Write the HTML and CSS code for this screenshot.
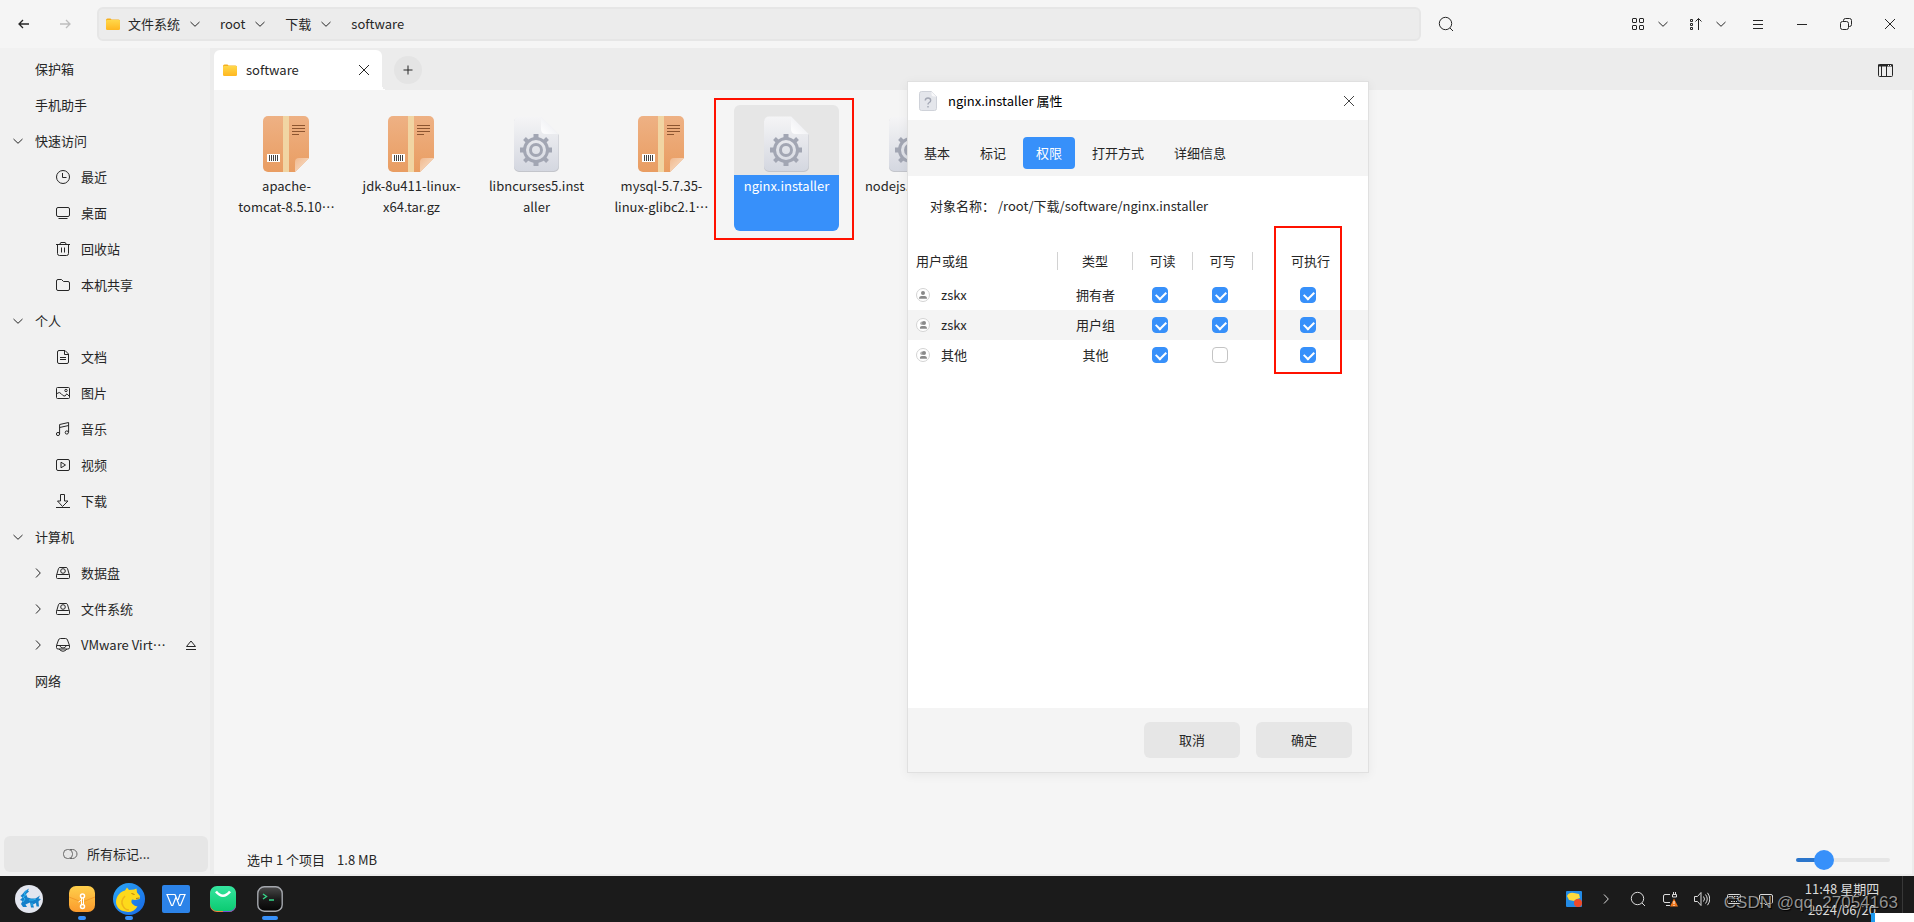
FILE: index.html
```
<!DOCTYPE html>
<html lang="zh-CN">
<head>
    <meta charset="UTF-8" />
    <meta name="viewport" content="width=device-width, initial-scale=1.0" />
    <title>software</title>
    <link rel="stylesheet" href="styles.css">
</head>
<body>
    <svg class="defs" aria-hidden="true">
        <defs>
            <linearGradient id="g-folder" x1="0" y1="0" x2="0" y2="1"><stop offset="0" stop-color="#ffd84a"/><stop offset="1" stop-color="#ffb720"/></linearGradient>
            <linearGradient id="g-box" x1="0" y1="0" x2="0" y2="1"><stop offset="0" stop-color="#eeb184"/><stop offset="1" stop-color="#e99d62"/></linearGradient>
            <linearGradient id="g-fold" x1="0" y1="0" x2="1" y2="1"><stop offset="0" stop-color="#f0b98f"/><stop offset=".6" stop-color="#f6d3b6"/></linearGradient>
            <linearGradient id="g-paper" x1="0" y1="0" x2="0" y2="1"><stop offset="0" stop-color="#f5f5f6"/><stop offset="1" stop-color="#d4d7e0"/></linearGradient>
            <linearGradient id="g-corner" x1="0" y1="1" x2="1" y2="0"><stop offset="0" stop-color="#fff"/><stop offset="1" stop-color="#e6e7ec"/></linearGradient>
            <linearGradient id="g-orange" x1="0" y1="0" x2="0" y2="1"><stop offset="0" stop-color="#ffd04c"/><stop offset="1" stop-color="#fb9a2c"/></linearGradient>
            <linearGradient id="g-blue" x1="0" y1="0" x2="1" y2="1"><stop offset="0" stop-color="#2ba7f5"/><stop offset="1" stop-color="#1767e6"/></linearGradient>
            <linearGradient id="g-green" x1="0" y1="0" x2="0" y2="1"><stop offset="0" stop-color="#35e59f"/><stop offset="1" stop-color="#0ccb72"/></linearGradient>
            <linearGradient id="g-term" x1="0" y1="0" x2="0" y2="1"><stop offset="0" stop-color="#4a4a4a"/><stop offset=".5" stop-color="#1c1c1c"/><stop offset="1" stop-color="#050505"/></linearGradient>
        </defs>
        <symbol id="down" viewBox="0 0 10 10"><path d="M.5 3 5 7.3 9.5 3"/></symbol>
        <symbol id="right" viewBox="0 0 10 10"><path d="M3 .5 7.3 5 3 9.5"/></symbol>
        <symbol id="close" viewBox="0 0 12 12"><path d="m1 1 10 10M11 1 1 11"/></symbol>
        <symbol id="search" viewBox="0 0 16 16"><circle cx="7.5" cy="7.5" r="6.2"/><path d="m12 12 3 3"/></symbol>
        <symbol id="folder" viewBox="0 0 16 16"><path d="M1 4a1.5 1.5 0 0 1 1.500-1.500h3l1 1H13.500A1.500 1.500 0 0 1 15 5v3H1z" fill="#f5b01e"/><rect x="1" y="4" width="14" height="10" rx="1.300" fill="url(#g-folder)"/></symbol>
        <symbol id="archive" viewBox="0 0 46 56">
            <path d="M5 0h36a5 5 0 0 1 5 5v37L32 56H5a5 5 0 0 1-5-5V5a5 5 0 0 1 5-5z" fill="url(#g-box)"/>
            <path d="M20 0h6v56h-6z" fill="#f1d5a3"/>
            <path d="M46 42 32 56V46q0-4 4-4z" fill="url(#g-fold)"/>
            <path d="M29 9.500h13M29 12.500h13M29 15.500h13M29 18.500h7" stroke="#8d5530"/>
            <path d="M4 38h13v8H4z" fill="#fff"/>
            <path d="M6.500 39v6M8.500 39v6M10.500 39v6M12.500 39v6M14.500 39v6" stroke="#444"/>
        </symbol>
        <symbol id="package" viewBox="0 0 46 56">
            <path d="M6 1.500h22L46 19v32a5 5 0 0 1-5 5H6a5 5 0 0 1-5-5V6a5 5 0 0 1 5-4.500z" fill="#c3c5cb"/>
            <path d="M6 .5h22L45.500 18v32a5 5 0 0 1-5 5H6a5 5 0 0 1-5-5V5.500a5 5 0 0 1 5-5z" fill="url(#g-paper)"/>
            <path d="M28 .5 45.500 18H33q-5 0-5-5z" fill="url(#g-corner)"/>
            <g fill="none" stroke="#a2a6b3">
                <circle cx="23" cy="34" r="11.500" stroke-width="3"/>
                <circle cx="23" cy="34" r="5.500" stroke-width="3"/>
                <path stroke-width="5" d="M23 22v-4M23 50v-4M35 34h4M7 34h4"/>
                <path stroke-width="4" d="m31.500 25.500 3-3M31.500 42.500l3 3M14.500 25.500l-3-3M14.500 42.500l-3 3"/>
            </g>
        </symbol>
        <symbol id="disk" viewBox="0 0 16 16"><path d="m1.500 10.500 2-7Q3.900 2.500 5 2.500h6q1.100 0 1.500 1l2 7M2.500 9.500h11q1 0 1 1v2q0 1-1 1h-11q-1 0-1-1v-2q0-1 1-1z"/><circle cx="8" cy="6" r="2.300"/></symbol>
        <symbol id="people" viewBox="0 0 14 14"><circle cx="7" cy="7" r="6.500" fill="#fff" stroke="#d3d3d3"/><circle cx="6" cy="5.200" r="1.800" fill="#b0b0b0"/><circle cx="8" cy="5" r="2" fill="#8a8a8a"/><path d="M4 10.800q-.5-2.800 2-2.800h2.500q2.500 0 2.500 2.800z" fill="#8a8a8a"/></symbol>
    </svg>

    <div class="window">
        <header class="toolbar">
            <div class="history">
                <button class="icon-btn" aria-label="后退"><svg class="icon" viewBox="0 0 16 16"><path d="M13 8H3.200M7 4 3 8l4 4" stroke-width="1.300"/></svg></button>
                <button class="icon-btn" aria-label="前进" disabled><svg class="icon" viewBox="0 0 16 16"><path d="M3 8h9.800M9 4l4 4-4 4" stroke-width="1.300"/></svg></button>
            </div>
            <nav class="address" aria-label="路径">
                <svg class="icon plain"><use href="#folder"/></svg>
                <a class="crumb" href="#">文件系统<svg class="chev"><use href="#down"/></svg></a>
                <a class="crumb" href="#">root<svg class="chev"><use href="#down"/></svg></a>
                <a class="crumb" href="#">下载<svg class="chev"><use href="#down"/></svg></a>
                <a class="crumb" href="#">software</a>
            </nav>
            <button class="icon-btn search-btn" aria-label="搜索"><svg class="icon"><use href="#search"/></svg></button>
            <div class="view-tools">
                <button class="split-btn" aria-label="视图"><svg class="icon-s" viewBox="0 0 14 14"><rect x="1.500" y="1.500" width="4" height="4" rx=".5"/><rect x="8.500" y="1.500" width="4" height="4" rx=".5"/><rect x="1.500" y="8.500" width="4" height="4" rx=".5"/><rect x="8.500" y="8.500" width="4" height="4" rx=".5"/></svg><svg class="chev"><use href="#down"/></svg></button>
                <button class="split-btn" aria-label="排序"><svg class="icon-s" viewBox="0 0 14 14"><path d="M1.500 2.500h2v2h-2zM1.500 6.500h2v2h-2zM1.500 10.500h2v2h-2zM9.500 13V1.500M6.500 4.500l3-3 3 3"/></svg><svg class="chev"><use href="#down"/></svg></button>
            </div>
            <button class="icon-btn" aria-label="菜单"><svg class="icon-s" viewBox="0 0 14 14"><path d="M2 3.500h10M2 7.500h10M2 11.500h10"/></svg></button>
            <button class="icon-btn" aria-label="最小化"><svg class="icon-s" viewBox="0 0 14 14"><path d="M2 7.500h10"/></svg></button>
            <button class="icon-btn" aria-label="还原"><svg class="icon-s" viewBox="0 0 14 14"><rect x="1.500" y="4.500" width="8" height="8" rx="2"/><path d="M4.500 4.500v-1q0-2 2-2h4q2 0 2 2v4q0 2-2 2h-1"/></svg></button>
            <button class="icon-btn" aria-label="关闭"><svg class="icon-x"><use href="#close"/></svg></button>
        </header>

        <div class="main">
            <aside class="sidebar">
                <nav class="places">
                    <a class="group" href="#"><span class="chev"></span>保护箱</a>
                    <a class="group" href="#"><span class="chev"></span>手机助手</a>
                    <a class="group" href="#"><svg class="chev"><use href="#down"/></svg>快速访问</a>
                    <a class="place" href="#"><span class="chev"></span><svg class="icon" viewBox="0 0 16 16"><circle cx="8" cy="8" r="6.500"/><path d="M7.500 4v4.500h4"/></svg>最近</a>
                    <a class="place" href="#"><span class="chev"></span><svg class="icon" viewBox="0 0 16 16"><rect x="1.500" y="2.500" width="13" height="9" rx="1.500"/><path d="M3.500 13.500h9"/></svg>桌面</a>
                    <a class="place" href="#"><span class="chev"></span><svg class="icon" viewBox="0 0 16 16"><path d="M1 3.500h14M2.500 3.500v9q0 2 2 2h7q2 0 2-2v-9M5 3.500q0-2 1-2h4q1 0 1 2M6.500 6.500v5M9.500 6.500v5"/></svg>回收站</a>
                    <a class="place" href="#"><span class="chev"></span><svg class="icon" viewBox="0 0 16 16"><path d="M1.500 4q0-1.500 1.500-1.500h3.500l2 2H13q1.500 0 1.500 1.500v6q0 1.500-1.500 1.500H3q-1.500 0-1.500-1.500z"/></svg>本机共享</a>
                    <a class="group" href="#"><svg class="chev"><use href="#down"/></svg>个人</a>
                    <a class="place" href="#"><span class="chev"></span><svg class="icon" viewBox="0 0 16 16"><path d="M4 1.500h6L13.500 5v8q0 1.500-1.500 1.500H4q-1.500 0-1.500-1.500V3q0-1.500 1.500-1.500zM9.500 2v3.500h4M5 8.500h6M5 10.500h6"/></svg>文档</a>
                    <a class="place" href="#"><span class="chev"></span><svg class="icon" viewBox="0 0 16 16"><rect x="1.500" y="2.500" width="13" height="11" rx="1"/><circle cx="11" cy="5.500" r="1.200"/><path d="M2 8.500q2.500-2 4 0t3 2.500 2-1.500 3 1.500"/></svg>图片</a>
                    <a class="place" href="#"><span class="chev"></span><svg class="icon" viewBox="0 0 16 16"><circle cx="3" cy="13" r="1.600"/><circle cx="11.800" cy="11.500" r="1.600"/><path d="M4.600 13V3.500l9-2v10M4.600 6.500l9-2"/></svg>音乐</a>
                    <a class="place" href="#"><span class="chev"></span><svg class="icon" viewBox="0 0 16 16"><rect x="1.500" y="2.500" width="13" height="11" rx="1.500"/><path d="M6 5.200v5.600L10.500 8z"/></svg>视频</a>
                    <a class="place" href="#"><span class="chev"></span><svg class="icon" viewBox="0 0 16 16"><path d="M1 14.500h14M5.500 1.500h4v6.500H13L7.500 13.500 2.500 8h3z"/></svg>下载</a>
                    <a class="group" href="#"><svg class="chev"><use href="#down"/></svg>计算机</a>
                    <a class="place" href="#"><svg class="chev"><use href="#right"/></svg><svg class="icon"><use href="#disk"/></svg>数据盘</a>
                    <a class="place" href="#"><svg class="chev"><use href="#right"/></svg><svg class="icon"><use href="#disk"/></svg>文件系统</a>
                    <a class="place" href="#"><svg class="chev"><use href="#right"/></svg><svg class="icon" viewBox="0 0 16 16"><path d="m1.500 8.500 2-5.500Q4 1.500 5.500 1.500h5q1.500 0 2 1.500l2 5.500v2q0 1.500-1.500 1.500H3q-1.500 0-1.500-1.500zM1.500 8.500h13M5 9q.5 2 3 2t3-2M4 12q4 4.500 8 0"/></svg>VMware Virt…<svg class="eject" viewBox="0 0 12 12"><path d="M1.500 7.500h9L6 2zM1 10.500h10"/></svg></a>
                    <a class="group" href="#"><span class="chev"></span>网络</a>
                </nav>
                <button class="tags-btn"><svg class="icon" viewBox="0 0 16 16"><rect x="1.500" y="3.500" width="9" height="9" rx="4"/><path d="M8 3.500h2.500a4.500 4.500 0 0 1 0 9H8"/></svg>所有标记...</button>
            </aside>

            <section class="content">
                <div class="tabbar">
                    <div class="tab">
                        <svg class="icon plain"><use href="#folder"/></svg>
                        <span class="tab-title">software</span>
                        <button class="tab-close" aria-label="关闭标签页"><svg class="icon-x"><use href="#close"/></svg></button>
                    </div>
                    <button class="tab-new" aria-label="新建标签页"><svg class="icon-s" viewBox="0 0 14 14"><path d="M2.500 7h9M7 2.500v9"/></svg></button>
                    <button class="panel-btn" aria-label="预览"><svg class="icon" viewBox="0 0 16 16"><rect x="1.500" y="2.500" width="14" height="12" rx="1"/><path d="M4.500 4v10.500M9.500 4v10.500"/><path d="M1 3.500h15" stroke-width="2"/><path d="M11 3.500h1M13 3.500h1" stroke="#ececec"/></svg></button>
                </div>

                <div class="files">
                    <div class="file"><div class="thumb"><svg><use href="#archive"/></svg></div><div class="name">apache-<br>tomcat-8.5.10…</div></div>
                    <div class="file"><div class="thumb"><svg><use href="#archive"/></svg></div><div class="name">jdk-8u411-linux-<br>x64.tar.gz</div></div>
                    <div class="file"><div class="thumb"><svg><use href="#package"/></svg></div><div class="name">libncurses5.inst<br>aller</div></div>
                    <div class="file"><div class="thumb"><svg><use href="#archive"/></svg></div><div class="name">mysql-5.7.35-<br>linux-glibc2.1…</div></div>
                    <div class="file selected"><div class="thumb"><svg><use href="#package"/></svg></div><div class="name">nginx.installer</div><div class="mark mark-file"></div></div>
                    <div class="file"><div class="thumb"><svg><use href="#package"/></svg></div><div class="name">nodejs.installer</div></div>
                </div>

                <footer class="statusbar">
                    <span>选中 1 个项目</span>
                    <span>1.8 MB</span>
                    <input class="zoom" type="range" min="0" max="100" value="24" aria-label="缩放">
                </footer>
            </section>
        </div>

        <div class="dialog" role="dialog" aria-labelledby="dialog-title">
            <div class="dialog-head">
                <svg class="doc" viewBox="0 0 18 20"><path d="M2.500.5h10l5 5v12q0 2-2 2h-13q-2 0-2-2v-15q0-2 2-2z" fill="#e4e6eb" stroke="#cfd2d9"/><path d="M12.500.5v3q0 2 2 2h3z" fill="#f8f8fa"/><path d="M6.200 9.500q.3-2.500 2.800-2.500t2.700 2.200q0 1.500-1.400 2.300T9 13.500M9 15v1.500" fill="none" stroke="#a2a6b3" stroke-width="1.400"/></svg>
                <span id="dialog-title">nginx.installer 属性</span>
                <button class="dialog-close" aria-label="关闭"><svg class="icon-x"><use href="#close"/></svg></button>
            </div>
            <div class="dialog-tabs" role="tablist">
                <button role="tab">基本</button>
                <button role="tab">标记</button>
                <button role="tab" class="active" aria-selected="true">权限</button>
                <button role="tab">打开方式</button>
                <button role="tab">详细信息</button>
            </div>
            <div class="dialog-body">
                <p class="target">对象名称： /root/下载/software/nginx.installer</p>
                <table class="perms">
                    <thead>
                        <tr><th class="col-user">用户或组</th><th class="col-type">类型</th><th class="col-flag">可读</th><th class="col-flag">可写</th><th>可执行</th></tr>
                    </thead>
                    <tbody>
                        <tr>
                            <td><div class="user"><svg viewBox="0 0 14 14"><circle cx="7" cy="7" r="6.500" fill="#fff" stroke="#d3d3d3"/><circle cx="7" cy="5" r="2" fill="#8a8a8a"/><path d="M3 10.800q0-2.800 2.500-2.800h3q2.500 0 2.500 2.800z" fill="#8a8a8a"/></svg>zskx</div></td>
                            <td>拥有者</td>
                            <td class="flag"><input type="checkbox" aria-label="拥有者可读" checked></td>
                            <td class="flag"><input type="checkbox" aria-label="拥有者可写" checked></td>
                            <td class="flag"><input type="checkbox" aria-label="拥有者可执行" checked></td>
                        </tr>
                        <tr>
                            <td><div class="user"><svg><use href="#people"/></svg>zskx</div></td>
                            <td>用户组</td>
                            <td class="flag"><input type="checkbox" aria-label="用户组可读" checked></td>
                            <td class="flag"><input type="checkbox" aria-label="用户组可写" checked></td>
                            <td class="flag"><input type="checkbox" aria-label="用户组可执行" checked></td>
                        </tr>
                        <tr>
                            <td><div class="user"><svg><use href="#people"/></svg>其他</div></td>
                            <td>其他</td>
                            <td class="flag"><input type="checkbox" aria-label="其他可读" checked></td>
                            <td class="flag"><input type="checkbox" aria-label="其他可写"></td>
                            <td class="flag"><input type="checkbox" aria-label="其他可执行" checked></td>
                        </tr>
                    </tbody>
                </table>
            </div>
            <div class="dialog-foot">
                <button>取消</button>
                <button>确定</button>
            </div>
            <div class="mark mark-exec"></div>
        </div>
    </div>

    <div class="taskbar">
        <button class="start" aria-label="开始"><svg width="28" height="28" viewBox="0 0 28 28"><circle cx="14" cy="14" r="14" fill="#e3e6ef"/><path d="M14 3.500 10 6 7.500 9l-2 2 2 1.500L5 15l2.500 1L6 19l2 3h4l-1.500-2.500L15 17.500l1 5H19l-1-3 3-1.500.5 3.500H24l-.5-5L26 14l-2.500-.5L25 10.500l-4.500 3-4.500 0-3.500-1L11 9l3-2.500-1-1z" fill="#1580ca"/><path d="m12 5-3 4 2 1-3 2 2 2-2 3M14 15h4l3-1M17 18v3" fill="none" stroke="#2fb4ef"/></svg></button>
        <button class="app running" aria-label="文件管理器"><svg width="26" height="26" viewBox="0 0 26 26"><rect width="26" height="26" rx="7" fill="url(#g-orange)"/><path d="M0 11 10 15q3 1 6 0l10-4" fill="none" stroke="#f29a2a"/><path d="M12.500 11v9M14.500 11v9" stroke="#fff"/><circle cx="13.500" cy="10" r="2" fill="#f9a93a" stroke="#fff" stroke-width="1.500"/><circle cx="13.500" cy="20.500" r="2" fill="#f9a93a" stroke="#fff" stroke-width="1.500"/><path d="m9.500 16 3-2" stroke="#fff"/></svg></button>
        <button class="app running" aria-label="浏览器"><svg width="32" height="32" viewBox="0 0 32 32"><circle cx="16" cy="16" r="16" fill="url(#g-blue)"/><path d="M3 19C3 13 8 8 12 7.500L14 4.500l2 2.500 5-.5L23.500 5.500l.5 4L27 13l-.5 3-4.500 1-3-.5q-1.500 2.500.5 4.500t5 2.500Q21 29 15 29l-5-1C6 27 3 23 3 19z" fill="#fdd91b"/><path d="M12 13q-5 5-2 10 2 4 6 4" fill="none" stroke="#efb41a" stroke-width="1.500"/><path d="m18.500 10.500 3 1M23 15.500l3-.5" stroke="#b87a08"/></svg></button>
        <button class="app" aria-label="WPS"><svg width="28" height="28" viewBox="0 0 28 28"><rect width="28" height="28" rx="2" fill="#2c83e8"/><path d="M10.500 9.500H5l4.500 11h1.200L14 12l3.300 8.500h1.200l4.500-11h-5L16 15M5 9.500h8L14 12" fill="none" stroke="#fff" stroke-width="1.200"/></svg></button>
        <button class="app" aria-label="应用商店"><svg width="26" height="26" viewBox="0 0 26 26"><rect y="1" width="26" height="25" rx="7" fill="#f0803c"/><path d="M13 20h13v-1a7 7 0 0 1-7 7h-6z" fill="#7355d8"/><rect width="26" height="25" rx="7" fill="url(#g-green)"/><path d="M6 5.500q7 8.500 14 0" fill="none" stroke="#fff" stroke-width="2.600"/></svg></button>
        <button class="app running active" aria-label="终端"><svg width="26" height="26" viewBox="0 0 26 26"><rect x=".8" y=".8" width="24.400" height="24.400" rx="6.500" fill="url(#g-term)" stroke="#a5a8ae" stroke-width="1.400"/><path d="m6 8 3.500 2.500L6 13M12 14h5" fill="none" stroke="#35d487" stroke-width="1.400"/></svg></button>

        <div class="tray">
            <button aria-label="浏览器消息"><svg class="plain" width="16" height="16" viewBox="0 0 16 16"><rect width="16" height="16" rx="1" fill="#238be6"/><path d="M1 5q2-4 7-3l5 1 1 4-3 1-3 2-5-1z" fill="#fddb3d"/><circle cx="12" cy="12" r="4" fill="#f04a28"/></svg></button>
            <button aria-label="展开"><svg class="chev"><use href="#right"/></svg></button>
            <button aria-label="搜索"><svg class="icon"><use href="#search"/></svg></button>
            <button aria-label="网络"><svg class="icon" viewBox="0 0 16 16"><path d="M8 3.500H3q-1.500 0-1.500 1.500v5q0 1.500 1.500 1.500h5M4 14.500h4M10.500 6V3.500h4V6zM11.500 3.500V1M13.500 3.500V1"/><path d="M12 7.500 16 15.500H8z" fill="#f0761a" stroke="none"/><path d="M12 10v3M12 14v1" stroke="#fff"/></svg></button>
            <button aria-label="音量"><svg class="icon" viewBox="0 0 16 16"><path d="M.5 5.500h3l3.500-4v13l-3.500-4h-3zM9.500 5.500q2 2.500 0 5M11.500 3.500q3.500 4.500 0 9M13.500 1.800q4.500 6.200 0 12.400"/></svg></button>
            <button aria-label="输入法"><svg class="icon" viewBox="0 0 16 16"><rect x="1.500" y="3.500" width="13" height="9" rx="1"/><path d="M3 5.500h10M3 7.500h10M5 10.500h6" stroke-dasharray="1.500 1"/></svg></button>
            <button aria-label="通知"><svg class="icon" viewBox="0 0 16 16"><path d="M3 3.500h10q1.500 0 1.500 1.500v6q0 1.500-1.500 1.500H9.500L8 14l-1.500-1.500H3q-1.500 0-1.500-1.500V5q0-1.500 1.500-1.500z"/></svg></button>
            <div class="clock"><span>11:48 星期四</span><span>2024/06/20</span></div>
            <div class="show-desktop"></div>
        </div>
        <span class="watermark">CSDN @qq_27054163</span>
        <div class="peek"></div>
    </div>
</body>
</html>
```
FILE: styles.css
```
* {
    box-sizing: border-box;
}

body {
    margin: 0;
    height: 100vh;
    display: flex;
    flex-direction: column;
    background: #f5f5f5;
    color: #262626;
    font: 13px/20px "Noto Sans CJK SC", "Noto Sans", sans-serif;
    overflow: hidden;
}

button {
    display: flex;
    align-items: center;
    justify-content: center;
    padding: 0;
    border: none;
    background: none;
    color: inherit;
    font: inherit;
}

a {
    color: inherit;
    text-decoration: none;
}

svg {
    flex: none;
    fill: none;
    stroke: currentColor;
}

.defs {
    position: absolute;
    width: 0;
    height: 0;
}

.defs symbol {
    stroke: inherit;
}

.icon {
    width: 16px;
    height: 16px;
}

.icon-s {
    width: 14px;
    height: 14px;
}

.icon-x {
    width: 12px;
    height: 12px;
}

.chev {
    width: 10px;
    height: 10px;
    flex: none;
}

.plain,
.thumb svg,
.doc,
.user svg,
.app svg,
.start svg {
    stroke: none;
}

.window {
    position: relative;
    flex: 1;
    display: flex;
    flex-direction: column;
}

/* toolbar */
.toolbar {
    display: flex;
    align-items: center;
    height: 48px;
    padding-right: 2px;
}

.icon-btn {
    width: 44px;
    height: 32px;
}

.icon-btn:disabled {
    color: #bdbdbd;
}

.history {
    display: flex;
    width: 97px;
    padding-left: 3px;
}

.history .icon-btn {
    width: 41px;
}

.address {
    flex: 1;
    display: flex;
    align-items: center;
    gap: 7px;
    height: 34px;
    padding-left: 6px;
    border: 2px solid #e6e6e6;
    border-radius: 6px;
    background: #ececec;
}

.crumb {
    display: flex;
    align-items: center;
    gap: 10px;
    margin-right: 13px;
}

.search-btn {
    width: 50px;
}

.view-tools {
    display: flex;
    margin-left: 149px;
}

.split-btn {
    width: 58px;
    height: 32px;
    gap: 13px;
}

/* sidebar */
.main {
    flex: 1;
    display: flex;
}

.sidebar {
    display: flex;
    flex-direction: column;
    width: 214px;
    padding: 3px 2px 4px 0;
    border-right: 4px solid #ececec;
    background: #f1f1f1;
}

.places {
    flex: 1;
}

.group,
.place {
    display: flex;
    align-items: center;
    height: 36px;
}

.group {
    gap: 12px;
    padding-left: 13px;
}

.place {
    gap: 10px;
    padding-left: 33px;
}

.place .icon {
    margin-left: 2px;
}

.eject {
    width: 12px;
    height: 12px;
    margin-left: auto;
    margin-right: 11px;
}

.tags-btn {
    gap: 9px;
    height: 36px;
    margin-left: 4px;
    border-radius: 6px;
    background: #e6e6e6;
}

.tags-btn .icon {
    color: #666;
}

/* tabs and files */
.content {
    flex: 1;
    display: flex;
    flex-direction: column;
    border-right: 2px solid #ececec;
    border-bottom: 2px solid #ececec;
}

.tabbar {
    display: flex;
    align-items: center;
    height: 42px;
    padding-top: 2px;
    background: #ececec;
}

.tab {
    position: relative;
    display: flex;
    align-items: center;
    width: 168px;
    height: 40px;
    padding: 0 12px 0 8px;
    border-radius: 6px 6px 0 0;
    background: #fff;
}

.tab::after {
    content: "";
    position: absolute;
    right: -5px;
    bottom: 0;
    width: 5px;
    height: 5px;
    background: radial-gradient(circle at 100% 0, #ececec 5px, #fff 5px);
}

.tab-title {
    flex: 1;
    padding-left: 8px;
}

.tab-new {
    width: 28px;
    height: 28px;
    margin-left: 12px;
    border-radius: 50%;
    background: #e4e4e4;
}

.panel-btn {
    width: 32px;
    margin-left: auto;
    margin-right: 11px;
}

.files {
    flex: 1;
    display: flex;
    align-items: flex-start;
    gap: 20px;
    padding: 15px 20px;
}

.file {
    position: relative;
    width: 105px;
    height: 126px;
    display: flex;
    flex-direction: column;
    text-align: center;
}

.thumb {
    height: 70px;
    padding: 11px 1px 0 0;
}

.thumb svg {
    display: block;
    width: 46px;
    height: 56px;
    margin: 0 auto;
}

.name {
    flex: 1;
    line-height: 21px;
    white-space: nowrap;
}

.selected .thumb {
    border-radius: 6px 6px 0 0;
    background: #e6e6e6;
}

.selected .name {
    border-radius: 0 0 6px 6px;
    background: #3790fa;
    color: #fff;
}

.mark {
    position: absolute;
    border: 2px solid #f10;
    pointer-events: none;
}

.mark-file {
    inset: -7px -15px -9px -20px;
}

.statusbar {
    display: flex;
    align-items: center;
    gap: 12px;
    height: 28px;
    padding: 0 22px 0 33px;
}

.zoom {
    width: 94px;
    height: 20px;
    margin: 0 0 0 auto;
    appearance: none;
    background: none;
}

.zoom::-webkit-slider-runnable-track {
    height: 4px;
    border-radius: 2px;
    background: linear-gradient(to right, #2b75cb 30%, #e6e6e6 30%);
}

.zoom::-webkit-slider-thumb {
    appearance: none;
    width: 20px;
    height: 20px;
    margin-top: -8px;
    border-radius: 50%;
    background: #3790fa;
}

/* properties dialog */
.dialog {
    position: absolute;
    left: 907px;
    top: 81px;
    display: flex;
    flex-direction: column;
    width: 462px;
    height: 692px;
    border: 1px solid #e0e0e0;
    background: #fff;
    box-shadow: 0 2px 10px rgba(0, 0, 0, .06);
}

.dialog-head {
    display: flex;
    align-items: center;
    height: 38px;
    padding: 0 12px 0 11px;
    gap: 11px;
    color: #000;
}

.doc {
    width: 18px;
    height: 20px;
}

.dialog-close {
    margin-left: auto;
    width: 14px;
    color: #444;
}

.dialog-tabs {
    display: flex;
    align-items: center;
    gap: 4px;
    height: 56px;
    padding: 10px 3px 0;
    background: #f4f4f4;
}

.dialog-tabs button {
    height: 32px;
    padding: 0 13px;
    border-radius: 4px;
}

.dialog-tabs .active {
    background: #3790fa;
    color: #fff;
}

.dialog-body {
    flex: 1;
}

.target {
    margin: 20px 22px 36px;
}

.perms {
    width: 100%;
    table-layout: fixed;
    border-collapse: separate;
    border-spacing: 0;
    text-align: center;
}

.perms th {
    height: 18px;
    padding: 0;
    border-right: 1px solid #d2d2d2;
    font-weight: normal;
    line-height: 18px;
}

.perms th:last-child {
    border-right: none;
}

.perms .col-user {
    width: 150px;
    padding-left: 8px;
    text-align: left;
}

.col-type {
    width: 75px;
}

.col-flag {
    width: 60px;
}

.perms thead::after {
    content: "";
    display: block;
    height: 10px;
}

.perms td {
    height: 30px;
    padding: 0;
}

.perms td.flag {
    padding-right: 6px;
}

.perms tbody tr:nth-child(even) {
    background: #f4f4f4;
}

.user {
    display: flex;
    align-items: center;
    gap: 11px;
    padding-left: 8px;
}

.user svg {
    width: 14px;
    height: 14px;
}

.perms input {
    display: block;
    width: 16px;
    height: 16px;
    margin: 0 auto;
    appearance: none;
    border: 1px solid #c4c4c4;
    border-radius: 4px;
    background: #fff;
}

.perms input:checked {
    border-color: #3790fa;
    background: #3790fa;
}

.perms input:checked::after {
    content: "";
    display: block;
    width: 8px;
    height: 5px;
    margin: 3px;
    border: solid #fff;
    border-width: 0 0 2px 2px;
    transform: rotate(-45deg);
}

.dialog-foot {
    display: flex;
    align-items: center;
    justify-content: flex-end;
    gap: 16px;
    height: 64px;
    padding-right: 16px;
    background: #f4f4f4;
}

.dialog-foot button {
    width: 96px;
    height: 36px;
    border-radius: 6px;
    background: #e6e6e6;
}

.mark-exec {
    top: 144px;
    right: 26px;
    width: 68px;
    height: 148px;
}

/* taskbar */
.taskbar {
    position: relative;
    display: flex;
    height: 46px;
    background: #1b1b1b;
    color: #dcdcdc;
}

.start {
    width: 58px;
}

.app {
    position: relative;
    width: 47px;
}

.running::after {
    content: "";
    position: absolute;
    bottom: 2px;
    width: 8px;
    height: 4px;
    border-radius: 2px;
    background: #3790fa;
}

.running.active::after {
    width: 16px;
}

.tray {
    display: flex;
    margin-left: auto;
}

.tray button {
    width: 32px;
}

.clock {
    display: flex;
    flex-direction: column;
    justify-content: center;
    width: 120px;
    text-align: center;
    line-height: 21px;
}

.show-desktop {
    width: 12px;
    border-left: 1px solid #383838;
}

.watermark {
    position: absolute;
    right: 16px;
    bottom: 7px;
    color: rgba(190, 190, 190, .75);
    font: 17px/24px "Liberation Sans", sans-serif;
    text-shadow: 1px 1px 1px #000;
}

.peek {
    position: absolute;
    right: 0;
    bottom: 0;
    width: 43px;
    height: 9px;
    border-left: 4px solid #1e9bf0;
    background: #fff;
}
```
